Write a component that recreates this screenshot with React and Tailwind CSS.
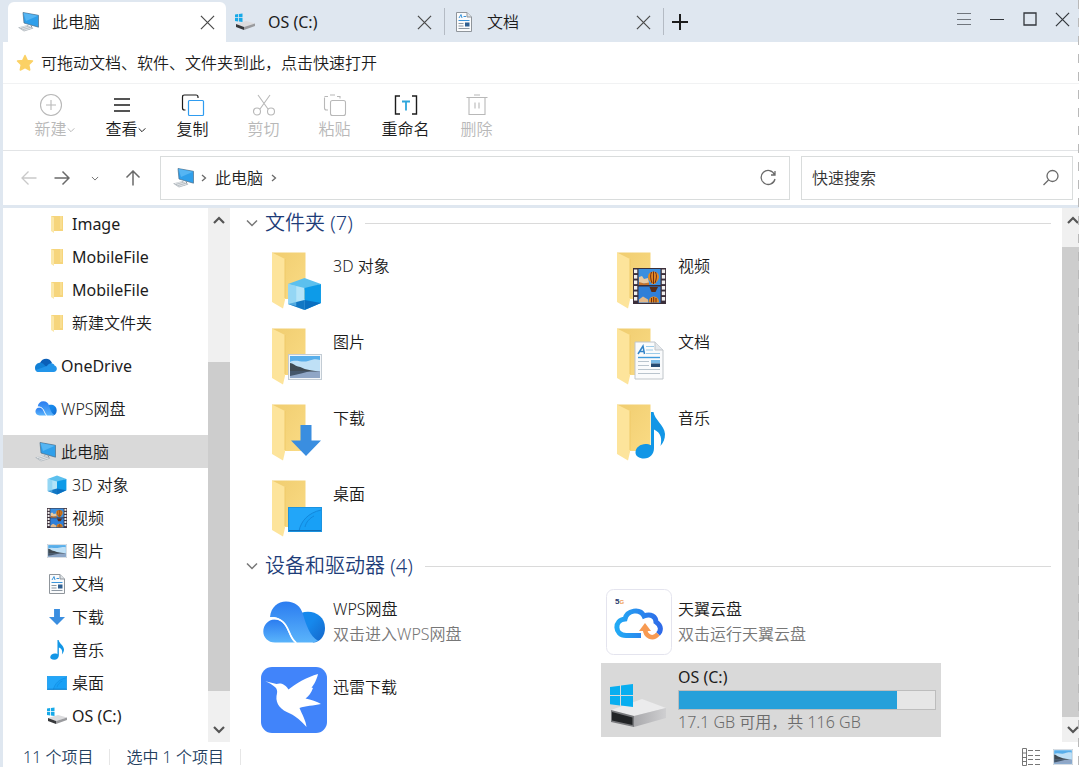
import React from "react";

/* ---------- glyphs ---------- */

const Cube = (p) => (
  <svg viewBox="0 0 34 34" preserveAspectRatio="none" {...p}>
    <path d="M17 1 33 7 17 13 1 7Z" fill="#5cc0ee" />
    <path d="M1 7 17 11V33L1 27Z" fill="#b4e4f8" />
    <path d="M33 7 17 11V33L33 26Z" fill="#0d9be8" />
    <path d="M1 27 17 23V33Z" fill="#1277c4" />
    <path d="M33 26 17 23V33Z" fill="#0a6fc0" />
    <path d="M1 7 9 9V29L1 27Z" fill="#7fcdf2" opacity=".6" />
  </svg>
);

const Film = (p) => (
  <svg viewBox="0 0 33 36" preserveAspectRatio="none" {...p}>
    <rect width="33" height="36" fill="#3b2f3a" />
    <rect x="5.500" y="1" width="22" height="16" fill="#3b8fe0" />
    <rect x="5.500" y="18.500" width="22" height="16.500" fill="#2f7fd8" />
    {[1.5, 7, 12.5, 18, 23.5, 29].map((y) => (
      <g key={y} fill="#f1efee">
        <rect x="1" y={y} width="3.300" height="3.600" />
        <rect x="28.800" y={y} width="3.300" height="3.600" />
      </g>
    ))}
    <path d="M6 16V9l3-1 2 3 4-1 1 5Z" fill="#e9c9a0" />
    <path d="M6 17v-3l5 1.500 5-1v2.500Z" fill="#c9742a" />
    <path d="M15 9a5.500 5.500 0 0 1 11 0c0 3-2.500 4.500-4 7h-3c-1.500-2.500-4-4-4-7Z" fill="#e58a22" />
    <path d="M18.500 4c-1.500 3-1 7 .5 11M20.500 3.500V16M22.500 4c1.500 3 1 7-.5 11" stroke="#6b2c12" strokeWidth="1" fill="none" />
    <path d="M16.500 19h8.500l-2.500 5h-4Z" fill="#5a2d16" />
    <path d="M6 34.500v-3l4-3 5 3v3Z" fill="#e2b98a" />
    <path d="M15.500 34.500c0-8 10.500-8 10.500 0Z" fill="#e58a22" />
    <path d="M18.500 30v4.500M20.700 29v5.500M23 30v4.500" stroke="#6b2c12" strokeWidth="1" />
  </svg>
);

const Photo = (p) => (
  <svg viewBox="0 0 34 26" preserveAspectRatio="none" {...p}>
    <rect x=".5" y=".5" width="33" height="25" fill="#f3f6f9" stroke="#c3ccd4" />
    <rect x="2" y="2" width="30" height="22" fill="#58aeea" />
    <path d="M2 8c6-3 12 1 18-1s8-2 12-1v12H2Z" fill="#bfe0f6" />
    <path d="M2 17h30v7H2Z" fill="#8fa6c6" />
    <path d="M2 9c3 0 5 3 8 3.500s6 2.500 9 3 6 1.500 13 2H2Z" fill="#3f4a53" />
    <path d="M2 17h20c-5 2-12 3-20 5Z" fill="#44566a" />
  </svg>
);

const Doc = (p) => (
  <svg viewBox="0 0 30 39" preserveAspectRatio="none" {...p}>
    <path d="M1 1h20l8 8v29H1Z" fill="#fafbfc" stroke="#c0c5ca" />
    <path d="M21 1v8h8" fill="#e4e8ec" stroke="#c0c5ca" />
    <path d="M4 13 9 5l1.500 8M6 10.500h4" stroke="#3284c9" strokeWidth="1.500" fill="none" />
    <path d="M12 5.500h8M12 9h7M12 12.500h14" stroke="#9ccbe9" strokeWidth="1" />
    <path d="M4 16.500h22" stroke="#3f9bdc" strokeWidth="1.400" />
    <path d="M4 20.500h11M4 24.500h11M4 28.500h22M4 32.500h22" stroke="#b9c4cd" strokeWidth="1.200" />
    <rect x="17" y="19" width="9" height="3.500" fill="#7ab9e6" />
    <rect x="17" y="22.500" width="9" height="3.500" fill="#264a72" />
  </svg>
);

const SmallDoc = (p) => (
  <svg viewBox="0 0 16 20" {...p}>
    <path d="M.5.500H11L15.500 5V19.500H.5Z" fill="#fafbfc" stroke="#8f959b" />
    <path d="M11 .5V5H15.500" fill="#dfe3e7" stroke="#8f959b" />
    <path d="M3 6 5 2.500 6 6M7.500 4.500H10M2.500 8.500H13.500" stroke="#3a94da" fill="none" />
    <path d="M2.500 11.500H7.500M2.500 14H7.500M2.500 16.500H13.500" stroke="#8d98a3" />
    <rect x="9" y="10.500" width="4.500" height="4" fill="#2f5f90" />
  </svg>
);

const Download = (p) => (
  <svg viewBox="0 0 30 31" preserveAspectRatio="none" {...p}>
    <path d="M9.500 0h11v15.500H30L15 31 0 15.500h9.500Z" fill="#3a8ee0" />
  </svg>
);

const Music = (p) => (
  <svg viewBox="0 0 30 47" preserveAspectRatio="none" {...p}>
    <path
      d="M16 0h2.500c1 8 11 13 11.500 22 0 5-1.500 8-4.500 12 1.500-7 1-13-6.500-16.500V36c0 6-4 10.500-10 10.500C4 46.500.5 44 .5 40.500c0-5 5-8.500 10-8.500 2 0 4 .3 5.500 1.300Z"
      fill="#1296e6"
    />
  </svg>
);

const Desktop = (p) => (
  <svg viewBox="0 0 34 25" preserveAspectRatio="none" {...p}>
    <rect x=".5" y=".5" width="33" height="24" fill="#18a0f6" stroke="#1b93e0" />
    <path d="M11 24C13 14 20 6 33 3V1H1v23Z" fill="#22a6f9" />
    <path d="M11 24C13 14 20 6 33 3M17 20c1-5 5-9 9-11" stroke="#1288dc" fill="none" />
    <path d="M1 23.500h32" stroke="#0e6cb4" />
  </svg>
);

const Pc = (p) => (
  <svg viewBox="0 0 22 20" {...p}>
    <path d="M5 .5 20.500 3.300V15.200L6 11Z" fill="#2f9fea" stroke="#4f6f88" strokeWidth=".7" />
    <path d="M5.500 1 20 3.700 8 9Z" fill="#55b5f3" />
    <path d="M13 13l1 3-3 1" stroke="#8a949c" fill="none" />
    <path d="M0 15.500 9.500 13 15.500 16.500 6 19.500Z" fill="#b4bbc1" />
    <path d="M2 15.700 9 13.800M4 17 11.500 14.700M5.500 18.300 13.500 16" stroke="#fff" strokeWidth=".6" />
  </svg>
);

const Drive = (p) => (
  <svg viewBox="0 0 66 66" {...p}>
    <defs>
      <linearGradient id="drv" x1="0" x2="1">
        <stop offset="0" stopColor="#a9a9ac" />
        <stop offset="1" stopColor="#cfcfd1" />
      </linearGradient>
    </defs>
    <path d="M5 43 36 32 60 41 28 49Z" fill="#ebebec" />
    <path d="M28 49 60 41V51L28 60Z" fill="url(#drv)" />
    <path d="M5 43 28 49V60L5 55Z" fill="#77787b" />
    <path d="M6 45 26.500 50.500V58L6 53.500Z" fill="#222426" />
    <path d="M4 20 14 18.700V28H4ZM15 18.500 27 17V28H15ZM4 29H14V38.500L4 37.200ZM15 29H27V40L15 38.600Z" fill="#08aef0" />
  </svg>
);

const SmallDrive = (p) => (
  <svg viewBox="0 0 22 18" {...p}>
    <path d="M2 11 12 8 21 10.500 10 14Z" fill="#dcdcde" />
    <path d="M10 14 21 10.500V13L10 17Z" fill="#9a9b9e" />
    <path d="M2 11 10 14V17L2 14Z" fill="#37393c" />
    <path d="M1 1.500 4.200 1v3.300H1ZM5 .9 8.500.4v3.900H5ZM1 5.100h3.200v3.300L1 8ZM5 5.100h3.500V9L5 8.500Z" fill="#17a9e8" />
  </svg>
);

const OneDrive = (p) => (
  <svg viewBox="0 0 22 15" {...p}>
    <path d="M5 5C7-.5 15-1 17 5l-5 5Z" fill="#0a5fb8" />
    <path d="M0 10c0-4 4-6.500 8-4.500l8 8.500H4c-2.500 0-4-1.500-4-4Z" fill="#1180d6" />
    <path d="M12 8c2-4 7-3.500 7.500-.5 3.500 1 3 6.500-1 6.500H4C2 14 1 13 .6 12Z" fill="#2295ea" />
  </svg>
);

const WpsCloud = ({ id, ...p }) => (
  <svg viewBox="0 0 64 43" {...p}>
    <defs>
      <linearGradient id={id} x1="0" y1="0" x2="0" y2="1">
        <stop offset="0" stopColor="#2b7cf0" />
        <stop offset="1" stopColor="#5ab4fb" />
      </linearGradient>
      <linearGradient id={`${id}r`} x1="0" y1="0" x2="1" y2="1">
        <stop offset=".4" stopColor="#1688ec" />
        <stop offset="1" stopColor="#1565c8" />
      </linearGradient>
    </defs>
    <path d="M39 12C50 8 63 14 63 27c0 8-5 14.500-12 14.500L38 24Z" fill={`url(#${id}r)`} />
    <path
      d="M8 16C9 6 16 .5 24 .5c9 0 15 5 17 13 3 10 7 22 15 26.200-2 1.300-5 1.800-8 1.800H35C27 37 27 18 12 16Z"
      fill={`url(#${id})`}
    />
    <path
      d="M12.500 18.500c9 0 12 8 14.500 14 2 5 4 8 6 9H13C6 41.500 1.300 36.500 1.300 30.500S6 18.500 12.500 18.500Z"
      fill={`url(#${id})`}
    />
    <path d="M8 17.200C20 16.500 24 23 27 30.500c2 5 4 8.500 7 11" fill="none" stroke="#fff" strokeWidth="1.600" />
  </svg>
);

const Tianyi = (p) => (
  <svg viewBox="0 0 66 66" {...p}>
    <defs>
      <linearGradient id="ty" x1="0" x2="1">
        <stop offset="0" stopColor="#22aaf5" />
        <stop offset="1" stopColor="#2f6be8" />
      </linearGradient>
    </defs>
    <rect x=".5" y=".5" width="65" height="65" rx="7" fill="#fff" stroke="#e4e4ee" />
    <path d="M35 46.500H20C8 46 8 31 19 30 21 21 34 19 38 27c7-3 12 1 12 6 6 4 5 9 2 12" fill="none" stroke="url(#ty)" strokeWidth="5" />
    <path d="M52 45c-5 6-13 3-13-6" fill="none" stroke="#f79a52" strokeWidth="4.500" />
    <path d="M39 34 45 42H33Z" fill="#f79a52" />
    <text x="9" y="15" fontSize="8" fontWeight="700" fill="#243a72" fontFamily="Liberation Sans, sans-serif">
      5<tspan fill="#ee9a50" fontSize="6">G</tspan>
    </text>
  </svg>
);

const Bird = (p) => (
  <svg viewBox="0 0 66 66" {...p}>
    <rect width="66" height="66" rx="11" fill="#4184fa" />
    <path
      d="M4.300 14.300 15.500 17C19 15.500 24 16.500 27.500 22.500 34 17 46 10 57 7 56 12 53 18 50.500 20.500l1.500.5C50 26 48 29 44.500 31.500 50 32.500 56 34.500 60 37 53 38.500 44 39 38.500 41 41 47 45 54 45.500 60 40 54 36 50 29 46.500 20 43 14.500 37 15.500 29 16 26 17 23.500 14.500 20.500 12 18 8 16 4.300 14.300Z"
      fill="#fff"
    />
  </svg>
);

const Folder = ({ children, ...p }) => (
  <svg viewBox="0 0 66 66" {...p}>
    <defs>
      <linearGradient id="fld" x1="0" y1="0" x2="1" y2="1">
        <stop offset="0" stopColor="#f0cd70" />
        <stop offset="1" stopColor="#fadb84" />
      </linearGradient>
    </defs>
    <path d="M11 4.500H44.500V51H23Z" fill="url(#fld)" />
    <path d="M11 4.500 24 11V52L22 60.500 11 54Z" fill="#fde49b" />
    <path d="M24 11V50" stroke="#efca68" />
    {children}
  </svg>
);

const SmallFolder = (p) => (
  <svg viewBox="0 0 14 18" {...p}>
    <path d="M1 1h12v15H4Z" fill="#f6d57c" />
    <path d="M1 1 4 2.500V18L1 16Z" fill="#fbe7a8" />
    <path d="M11 1v13" stroke="#fbe7a8" />
  </svg>
);

const Stroke = ({ d, box = "0 0 24 24", w = 1.5, children, ...p }) => (
  <svg viewBox={box} fill="none" stroke="currentColor" strokeWidth={w} {...p}>
    {d && <path d={d} />}
    {children}
  </svg>
);

const Cross = (p) => <Stroke box="0 0 16 16" w={1.3} d="M1 1 15 15M15 1 1 15" {...p} />;
const Chevron = (p) => <Stroke box="0 0 12 8" w={1.5} d="M1 1.500 6 6.500 11 1.500" {...p} />;

/* ---------- tab strip ---------- */

const tabs = [
  { label: "此电脑", icon: <Pc className="h-5 w-[22px]" />, active: true },
  { label: "OS (C:)", icon: <SmallDrive className="h-[18px] w-[22px]" />, latin: true },
  { label: "文档", icon: <SmallDoc className="h-5 w-4" /> },
];

function TabStrip() {
  return (
    <header className="flex h-[42px] items-stretch bg-[#dfe7f0] pl-[5px] pt-0.5">
      <div role="tablist" className="flex">
        {tabs.map((t) => (
          <div
            key={t.label}
            className={
              t.active
                ? "flex w-[218px] items-center rounded-t-md bg-white px-2.5"
                : "relative flex w-[219px] items-center pl-2 pr-3 after:absolute after:right-0 after:top-1.5 after:h-[27px] after:w-px after:bg-[#b4bbc4]"
            }
          >
            <button role="tab" aria-selected={!!t.active} className="flex flex-1 items-center gap-3 text-left">
              <span className="flex w-[22px] justify-center">{t.icon}</span>
              <span className={t.latin ? "font-normal" : ""}>{t.label}</span>
            </button>
            <button aria-label={`关闭 ${t.label}`} className="p-px text-[#4a4a4a]">
              <Cross className="size-[15px]" />
            </button>
          </div>
        ))}
      </div>
      <button aria-label="新建标签页" className="flex w-8 items-center justify-center">
        <Stroke box="0 0 16 16" w={2} d="M8 0V16M0 8H16" className="size-4" />
      </button>
      <div className="ml-auto flex items-start text-[#33373c]">
        <button aria-label="菜单" className="flex h-[34px] w-[33px] items-center justify-center">
          <Stroke box="0 0 14 14" w={1} d="M0 1.500H14M0 7.500H14M0 12.500H14" className="size-3.5 text-[#70767d]" />
        </button>
        <button aria-label="最小化" className="flex h-[34px] w-[33px] items-center justify-center">
          <Stroke box="0 0 14 14" w={1} d="M0 7.500H14" className="size-3.5" />
        </button>
        <button aria-label="最大化" className="flex h-[34px] w-[33px] items-center justify-center">
          <Stroke box="0 0 14 14" w={1.3} d="M1 1H13V13H1Z" className="size-3.5" />
        </button>
        <button aria-label="关闭" className="flex h-[34px] w-[33px] items-center justify-center">
          <Cross className="size-[15px]" />
        </button>
      </div>
    </header>
  );
}

/* ---------- toolbar ---------- */

const tools = [
  {
    label: "新建",
    menu: true,
    off: true,
    icon: (
      <Stroke w={1.1} className="size-6">
        <circle cx="12" cy="12" r="10.500" />
        <path d="M12 7V17M7 12H17" />
      </Stroke>
    ),
  },
  { label: "查看", menu: true, icon: <Stroke w={1.5} d="M4 6H20M4 12H20M4 18H20" className="size-6" /> },
  {
    label: "复制",
    icon: (
      <Stroke w={1.2} className="size-6">
        <path d="M4.500 17H3.500C2 17 1.500 16.500 1.500 15V4C1.500 2.500 2 2 3.500 2H15C16.500 2 17 2.500 17 4V5" />
        <rect x="7.500" y="7.500" width="15" height="15" rx="1" stroke="#2f9cf0" />
      </Stroke>
    ),
  },
  {
    label: "剪切",
    off: true,
    icon: (
      <Stroke w={1.1} className="size-6">
        <path d="M6 2 16 16M18 2 8 16" />
        <circle cx="5" cy="18.500" r="3.500" />
        <circle cx="19" cy="18.500" r="3.500" />
      </Stroke>
    ),
  },
  {
    label: "粘贴",
    off: true,
    icon: (
      <Stroke w={1.1} className="size-6">
        <path d="M5 17H3.500C2 17 1.500 16.500 1.500 15V4.500M1.500 3.500H5M7 2H12M14 3.500H17V5.500" />
        <rect x="7.500" y="7.500" width="15" height="15" rx="2" />
      </Stroke>
    ),
  },
  {
    label: "重命名",
    icon: (
      <Stroke w={1.4} className="size-6">
        <path d="M6 3H1.500V21H6M18 3H22.500V21H18" />
        <path d="M8 8.500H16M12 8.500V17.500" stroke="#2ea6dc" strokeWidth="1.800" />
      </Stroke>
    ),
  },
  {
    label: "删除",
    off: true,
    icon: (
      <Stroke w={1.1} className="size-6">
        <path d="M1.500 4.500H22.500M9 2H15M4 4.500V21.500H20V4.500M10 9.500V15.500M14 9.500V15.500" />
      </Stroke>
    ),
  },
];

function Toolbar() {
  return (
    <div className="flex h-[67px] border-b border-[#e2e4e6] pl-3 pt-[9px]">
      {tools.map((t) => (
        <button
          key={t.label}
          disabled={t.off}
          className="flex w-[71px] flex-col items-center disabled:text-[#b8b8b8]"
        >
          {t.icon}
          <span className="relative leading-6">
            {t.label}
            {t.menu && <Chevron className="absolute left-full top-2.5 h-1.5 w-2" />}
          </span>
        </button>
      ))}
    </div>
  );
}

/* ---------- address row ---------- */

function AddressRow() {
  return (
    <div className="flex h-[54px] items-center pr-1.5 text-[#6a6a6a]">
      <div className="flex w-[157px] items-center pl-[18px]">
        <button aria-label="后退" disabled className="pr-[17px] disabled:text-[#c9c9c9]">
          <Stroke box="0 0 16 16" w={1.300} d="M15.500 8H1M7.500 1.500 1 8 7.500 14.500" className="size-4" />
        </button>
        <button aria-label="前进" className="pr-[17px]">
          <Stroke box="0 0 16 16" w={1.500} d="M.5 8H15M8.500 1.500 15 8 8.500 14.500" className="size-4" />
        </button>
        <button aria-label="最近位置" className="pl-1 pr-[26px]">
          <Chevron className="h-[5px] w-2" />
        </button>
        <button aria-label="向上">
          <Stroke box="0 0 16 16" w={1.500} d="M8 15.500V1M1.500 7.500 8 1 14.500 7.500" className="size-4" />
        </button>
      </div>
      <nav aria-label="地址" className="mr-[11px] flex h-11 flex-1 items-center border border-[#d9dcdc] px-3">
        <Pc className="h-5 w-[22px]" />
        <Stroke box="0 0 6 8" w={1.300} d="M1 1 4.500 4 1 7" className="ml-1.5 mr-2 h-2 w-1.5" />
        <a href="#pc" className="text-[#222]">此电脑</a>
        <Stroke box="0 0 6 8" w={1.300} d="M1 1 4.500 4 1 7" className="ml-2 h-2 w-1.5" />
        <button aria-label="刷新" className="ml-auto">
          <Stroke box="0 0 18 18" w={1.300} d="M15.500 5.500A7 7 0 1 0 16 10M16 2V6H12" className="size-[18px]" />
        </button>
      </nav>
      <label className="flex h-11 w-[272px] items-center border border-[#d9dcdc] pl-2.5 pr-3">
        <input
          type="search"
          aria-label="快速搜索"
          placeholder="快速搜索"
          className="min-w-0 flex-1 bg-transparent outline-none placeholder:text-[#333] placeholder:opacity-100"
        />
        <Stroke box="0 0 18 18" w={1.300} className="size-[18px]">
          <circle cx="10.500" cy="7" r="5.500" />
          <path d="M6.500 11 1.500 16" />
        </Stroke>
      </label>
    </div>
  );
}

/* ---------- sidebar ---------- */

const sf = <SmallFolder className="h-[18px] w-3.5" />;
const tree = [
  { label: "Image", icon: sf, sub: true, latin: true },
  { label: "MobileFile", icon: sf, sub: true, latin: true },
  { label: "MobileFile", icon: sf, sub: true, latin: true },
  { label: "新建文件夹", icon: sf, sub: true },
  { label: "OneDrive", icon: <OneDrive className="h-[15px] w-[22px]" />, latin: true },
  { label: "WPS网盘", icon: <WpsCloud id="wps-s" className="h-[15px] w-[22px]" /> },
  { label: "此电脑", icon: <Pc className="h-5 w-[22px]" />, selected: true },
  { label: "3D 对象", icon: <Cube className="size-5" />, sub: true },
  { label: "视频", icon: <Film className="size-5" />, sub: true },
  { label: "图片", icon: <Photo className="h-3.5 w-5" />, sub: true },
  { label: "文档", icon: <SmallDoc className="h-5 w-4" />, sub: true },
  { label: "下载", icon: <Download className="size-4" />, sub: true },
  { label: "音乐", icon: <Music className="h-5 w-3.5" />, sub: true },
  { label: "桌面", icon: <Desktop className="h-3.5 w-5" />, sub: true },
  { label: "OS (C:)", icon: <SmallDrive className="h-[18px] w-[22px]" />, sub: true, latin: true },
];

function Sidebar() {
  return (
    <nav aria-label="导航窗格" className="w-[205px] shrink-0">
      <ul className="-mt-px">
        {tree.map((n, i) => (
          <li key={i} className={n.sub ? "" : "mt-2.5"}>
            <a
              href="#node"
              className={`flex h-[33px] items-center gap-1 ${n.sub ? "pl-[43px]" : "pl-8"} ${n.selected ? "bg-[#d9d9d9]" : ""} ${n.latin ? "font-normal" : ""}`}
            >
              <span className="flex w-[22px] justify-center">{n.icon}</span>
              {n.label}
            </a>
          </li>
        ))}
      </ul>
    </nav>
  );
}

function Scrollbar({ before, thumb, after, className }) {
  return (
    <div aria-hidden="true" className={`flex shrink-0 flex-col overflow-hidden bg-[#f0f0f0] ${className}`}>
      <div className="flex h-6 w-[22px] items-center justify-center text-[#555]">
        <Stroke box="0 0 12 8" w={2.200} d="M1 7 6 2 11 7" className="h-2 w-3" />
      </div>
      <div style={{ flexGrow: before }} />
      <div className="bg-[#cdcdcd]" style={{ flexGrow: thumb }} />
      <div style={{ flexGrow: after }} />
      <div className="flex h-6 w-[22px] items-center justify-center text-[#555]">
        <Stroke box="0 0 12 8" w={2.200} d="M1 1 6 6 11 1" className="h-2 w-3" />
      </div>
    </div>
  );
}

/* ---------- content ---------- */

const folders = [
  { label: "3D 对象", over: <Cube x="26" y="29" width="35" height="34" /> },
  { label: "视频", over: <Film x="27" y="20" width="33" height="36" /> },
  { label: "图片", over: <Photo x="27" y="30" width="34" height="26" /> },
  { label: "文档", over: <Doc x="28" y="17" width="30" height="39" /> },
  { label: "下载", over: <Download x="30" y="25" width="30" height="31" /> },
  { label: "音乐", over: <Music x="29" y="12" width="30" height="47" /> },
  { label: "桌面", over: <Desktop x="27" y="31" width="34" height="25" /> },
];

function Heading({ children }) {
  return (
    <div className="flex h-[30px] items-center">
      <button aria-label="折叠" className="mr-1.5 text-[#777]">
        <Chevron className="h-2 w-3.5" />
      </button>
      <h2 className="text-xl leading-[30px] text-[#1d3c78]">{children}</h2>
      <div className="ml-3 h-px flex-1 bg-[#dadada]" />
    </div>
  );
}

function Tile({ icon, title, note, pad }) {
  return (
    <a href="#item" className="flex h-[74px] gap-1.5 px-[5px]">
      <span className="flex w-[66px] shrink-0 items-center justify-center">{icon}</span>
      <span className={`flex flex-col leading-[25px] ${pad}`}>
        <span>{title}</span>
        {note && <span className="text-[#777]">{note}</span>}
      </span>
    </a>
  );
}

function Content() {
  return (
    <main className="flex-1 pl-[15px] pr-[11px]">
      <Heading>文件夹 (7)</Heading>
      <div className="ml-[11px] mt-1.5 grid grid-cols-[repeat(auto-fill,340px)] gap-x-[5px] gap-y-0.5">
        {folders.map((f) => (
          <Tile key={f.label} icon={<Folder className="size-[66px]">{f.over}</Folder>} title={f.label} pad="pt-2.5" />
        ))}
      </div>
      <div className="mt-[5px]">
        <Heading>设备和驱动器 (4)</Heading>
      </div>
      <div className="ml-[11px] mt-1 grid grid-cols-[repeat(auto-fill,340px)] gap-x-[5px] gap-y-1">
        <Tile icon={<WpsCloud id="wps-l" className="h-[43px] w-16" />} title="WPS网盘" note="双击进入WPS网盘" pad="pt-3" />
        <Tile icon={<Tianyi className="size-[66px]" />} title="天翼云盘" note="双击运行天翼云盘" pad="pt-3" />
        <Tile icon={<Bird className="size-[66px]" />} title="迅雷下载" pad="pt-3" />
        <a href="#c" className="flex h-[74px] gap-1.5 bg-[#d9d9d9] px-[5px]">
          <Drive className="mt-1 size-[66px] shrink-0" />
          <span className="flex flex-1 flex-col pt-0.5">
            <span className="font-normal leading-[25px]">OS (C:)</span>
            <span
              role="progressbar"
              aria-label="已用空间"
              aria-valuenow={85}
              className="block h-5 border border-[#bdbdbd] bg-[#e6e6e6]"
            >
              <span className="block h-full bg-[#26a0da]" style={{ width: "85%" }} />
            </span>
            <span className="leading-[25px] text-[#6b6b6b]">17.1 GB 可用，共 116 GB</span>
          </span>
        </a>
      </div>
    </main>
  );
}

function StatusBar() {
  return (
    <footer className="flex h-[25px] items-center pl-5 pr-1.5 pt-[5px] leading-5 text-[#24405f]">
      <span>11 个项目</span>
      <span className="mx-4 h-4 w-px bg-[#e6e6e6]" />
      <span>选中 1 个项目</span>
      <span className="mx-4 h-4 w-px bg-[#e6e6e6]" />
      <button aria-label="详细信息" className="ml-auto mr-3 text-[#777]">
        <Stroke box="0 0 20 20" w={1} className="size-5">
          <path d="M1.500 1.500H5.500V18.500H1.500ZM1.500 6H5.500M1.500 10.500H5.500M1.500 14.500H5.500" />
          <path d="M7 3.500H20M7 8.500H20M7 12.500H20M7 17.500H20" strokeDasharray="5 2" />
        </Stroke>
      </button>
      <button aria-label="大图标">
        <Photo className="h-4 w-5" />
      </button>
    </footer>
  );
}

export default function App() {
  return (
    <div className="relative flex min-h-screen flex-col border-l-[3px] border-[#dfe7f0] bg-white font-['Noto_Sans','Noto_Sans_CJK_SC',sans-serif] text-base font-[350] text-[#1c1c1c]">
      <TabStrip />
      <div className="flex h-[42px] items-center gap-1.5 border-b border-[#f1f2f3] pl-3">
        <svg viewBox="0 0 20 20" className="size-5">
          <path
            d="M10 2.500 12.200 7.400 17.500 8 13.700 11.700 14.700 17 10 14.500 5.300 17 6.300 11.700 2.500 8 7.800 7.400Z"
            fill="#fbd165"
            stroke="#fbd165"
            strokeWidth="1.500"
            strokeLinejoin="round"
          />
        </svg>
        <span>可拖动文档、软件、文件夹到此，点击快速打开</span>
      </div>
      <Toolbar />
      <AddressRow />
      <div className="h-[3px] bg-[#dfe7f0]" />
      <div className="flex flex-1">
        <Sidebar />
        <Scrollbar before={130} thumb={329} after={27} className="w-[22px]" />
        <Content />
        <Scrollbar before={15} thumb={470} after={1} className="w-[17px]" />
      </div>
      <StatusBar />
      <div
        aria-hidden="true"
        className="pointer-events-none absolute inset-y-0 right-0 w-px bg-[repeating-linear-gradient(to_bottom,#b9b9b9_0_9px,transparent_9px_18px)]"
      />
    </div>
  );
}
